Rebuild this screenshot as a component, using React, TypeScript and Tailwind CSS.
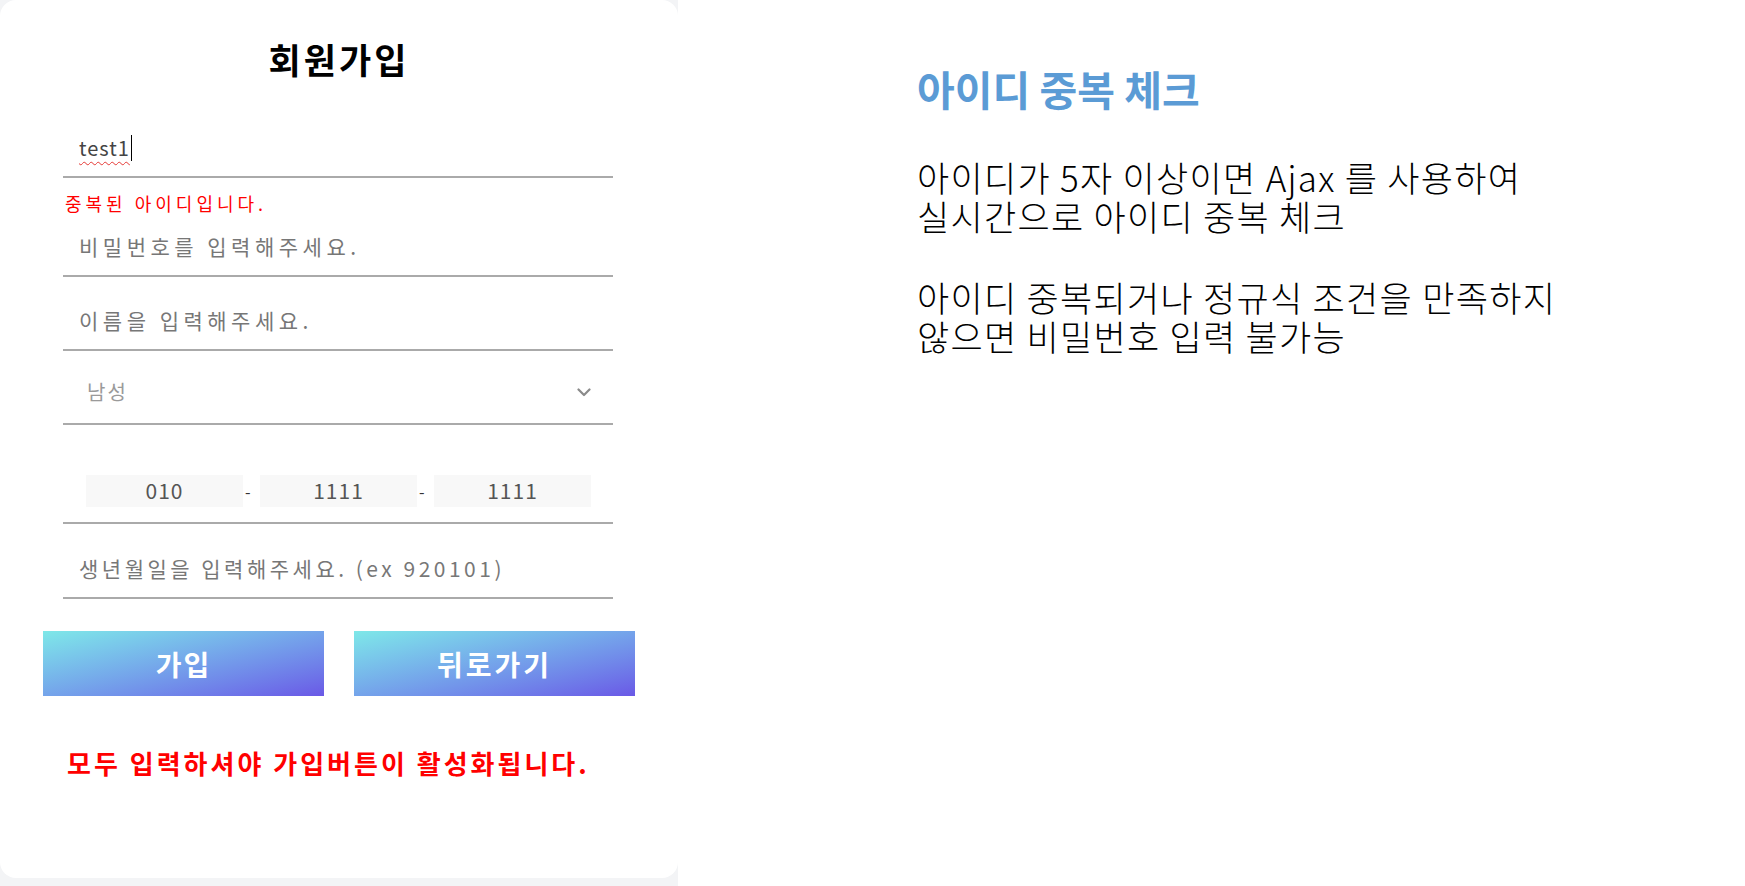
import React from 'react';

function Chevron() {
  return (
    <svg width="14" height="9" viewBox="0 0 14 9" fill="none">
      <path d="M1.5 1.5L7 7L12.5 1.5" stroke="#8a8a8a" strokeWidth="2.2" strokeLinecap="round" strokeLinejoin="round" />
    </svg>
  );
}

function PhoneBox({ value }: { value: string }) {
  return (
    <div className="w-[157px] h-[32px] bg-[#f8f8f8] flex items-center justify-center text-[21px] tracking-[1px] text-[#555]">
      {value}
    </div>
  );
}

function Dash() {
  return <span className="w-[17px] pl-[2px] text-[16px] text-[#333] leading-none">-</span>;
}

export default function App() {
  return (
    <div className="flex w-full h-[886px] bg-white font-['Noto_Sans_CJK_KR',sans-serif] overflow-hidden">
      {/* 왼쪽: 회원가입 폼 */}
      <div className="w-[678px] h-full bg-[#f3f4f6] shrink-0">
        <div className="h-[878px] bg-white rounded-[16px]">
          <h1 className="pt-[38px] h-[79px] leading-[42px] text-center text-[35px] font-bold tracking-[3px] text-black">
            회원가입
          </h1>

          <div className="ml-[63px] w-[550px] mt-[41px]">
            <div className="h-[58px] border-b-2 border-[#aaaaaa] flex items-center pl-[16px]">
              <span className="text-[20px] tracking-[1px] text-[#444] underline decoration-wavy decoration-[#e53935] decoration-1 underline-offset-[5px]">
                test1
              </span>
              <span className="w-px h-[26px] bg-black ml-[1px]" />
            </div>

            <div className="h-[39px] pt-[13px] leading-[24px] pl-[2px] text-[18px] tracking-[4px] text-[#ff0000]">
              중복된 아이디입니다.
            </div>

            <div className="h-[60px] border-b-2 border-[#aaaaaa]">
              <input
                type="password"
                placeholder="비밀번호를 입력해주세요."
                className="w-full h-full pl-[16px] bg-transparent outline-none text-[21px] tracking-[4.5px] placeholder:text-[#777]"
              />
            </div>

            <div className="h-[60px] mt-[14px] border-b-2 border-[#aaaaaa]">
              <input
                type="text"
                placeholder="이름을 입력해주세요."
                className="w-full h-full pl-[16px] bg-transparent outline-none text-[21px] tracking-[4.5px] placeholder:text-[#777]"
              />
            </div>

            <div className="h-[64px] mt-[10px] border-b-2 border-[#aaaaaa] flex items-center justify-between pl-[24px] pr-[22px]">
              <span className="text-[20px] tracking-[2px] text-[#9a9a9a]">남성</span>
              <Chevron />
            </div>

            <div className="h-[99px] pt-[50px] border-b-2 border-[#aaaaaa]">
              <div className="flex items-center ml-[23px]">
                <PhoneBox value="010" />
                <Dash />
                <PhoneBox value="1111" />
                <Dash />
                <PhoneBox value="1111" />
              </div>
            </div>

            <div className="h-[61px] mt-[14px] border-b-2 border-[#aaaaaa]">
              <input
                type="text"
                placeholder="생년월일을 입력해주세요. (ex 920101)"
                className="w-full h-full pl-[16px] bg-transparent outline-none text-[21px] tracking-[3.5px] placeholder:text-[#777]"
              />
            </div>
          </div>

          <div className="ml-[43px] mt-[32px] flex gap-[30px]">
            <button className="w-[281px] h-[65px] bg-linear-to-br from-[#7ee8e8] to-[#6a58e6] text-white text-[28px] font-bold tracking-[2px]">
              가입
            </button>
            <button className="w-[281px] h-[65px] bg-linear-to-br from-[#7ee8e8] to-[#6a58e6] text-white text-[28px] font-bold tracking-[3px]">
              뒤로가기
            </button>
          </div>

          <p className="ml-[67px] mt-[52px] leading-[30px] text-[26px] font-bold tracking-[3px] text-[#ff0000]">
            모두 입력하셔야 가입버튼이 활성화됩니다.
          </p>
        </div>
      </div>

      {/* 오른쪽: 설명 */}
      <div className="pl-[239px] pt-[64px]">
        <h2 className="leading-[48px] text-[41px] font-bold text-[#5b9bd5]">아이디 중복 체크</h2>
        <div className="mt-[45px] text-[35px] font-light leading-[39px] tracking-[1.3px] text-black">
          <p>
            아이디가 5자 이상이면 Ajax 를 사용하여
            <br />
            실시간으로 아이디 중복 체크
          </p>
          <p className="mt-[42px]">
            아이디 중복되거나 정규식 조건을 만족하지
            <br />
            않으면 비밀번호 입력 불가능
          </p>
        </div>
      </div>
    </div>
  );
}
